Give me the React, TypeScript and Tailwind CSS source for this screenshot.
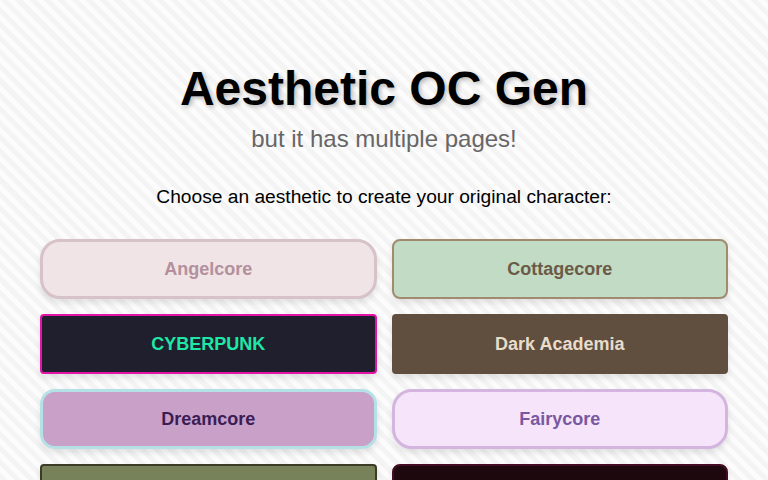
import React from "react";

const items = [
  { name: "Angelcore", cls: "bg-[#f0e4e6] border-[3px] border-[#d8c2ca] rounded-[20px] text-[#b3909d]" },
  { name: "Cottagecore", cls: "bg-[#c2dbc5] border-2 border-[#a08b6f] rounded-[8px] text-[#6b5a45]" },
  { name: "CYBERPUNK", cls: "bg-[#1f1f2d] border-2 border-[#e312a8] rounded-[4px] text-[#1ee8a8]" },
  { name: "Dark Academia", cls: "bg-[#604e3f] border-2 border-[#604e3f] rounded-[4px] text-[#e8dccb]" },
  { name: "Dreamcore", cls: "bg-[#c8a0c8] border-[3px] border-[#b4e0e6] rounded-[15px] text-[#3b1d55] shadow-[0_0_10px_rgba(176,224,230,0.6)]" },
  { name: "Fairycore", cls: "bg-[#f6e5fa] border-[3px] border-[#d4b5e0] rounded-[20px] text-[#7a58a0]" },
  { name: "Goblincore", cls: "bg-[#77815a] border-2 border-[#3b3b26] rounded-[4px] text-[#e8e2c8]" },
  { name: "Gothic", cls: "bg-[#1d080e] border-2 border-[#450b24] rounded-[8px] text-[#c0c0c0]" },
];

export default function App() {
  return (
    <div
      className="w-[768px] h-[480px] overflow-hidden bg-[repeating-linear-gradient(45deg,#f4f4f4,#f4f4f4_5px,#fcfcfc_5px,#fcfcfc_10px)] font-['Liberation_Sans',Arial,sans-serif]"
    >
      <div className="px-10 pt-[60px] flex flex-col items-center">
        <h1 className="text-[48px] font-bold leading-[58px] text-black [text-shadow:2px_2px_4px_rgba(0,0,0,0.25)]">
          Aesthetic OC Gen
        </h1>
        <p className="text-[24px] leading-[28px] text-[#666666] mt-[7px]">but it has multiple pages!</p>
        <p className="text-[19.2px] leading-[22px] text-black mt-[33px]">
          Choose an aesthetic to create your original character:
        </p>
        <div className="grid grid-cols-2 gap-[15px] w-full mt-[31px]">
          {items.map((it) => (
            <div
              key={it.name}
              className={`h-[60px] flex items-center justify-center text-[18px] font-bold shadow-[0_4px_6px_rgba(0,0,0,0.1)] ${it.cls}`}
            >
              {it.name}
            </div>
          ))}
        </div>
      </div>
    </div>
  );
}
